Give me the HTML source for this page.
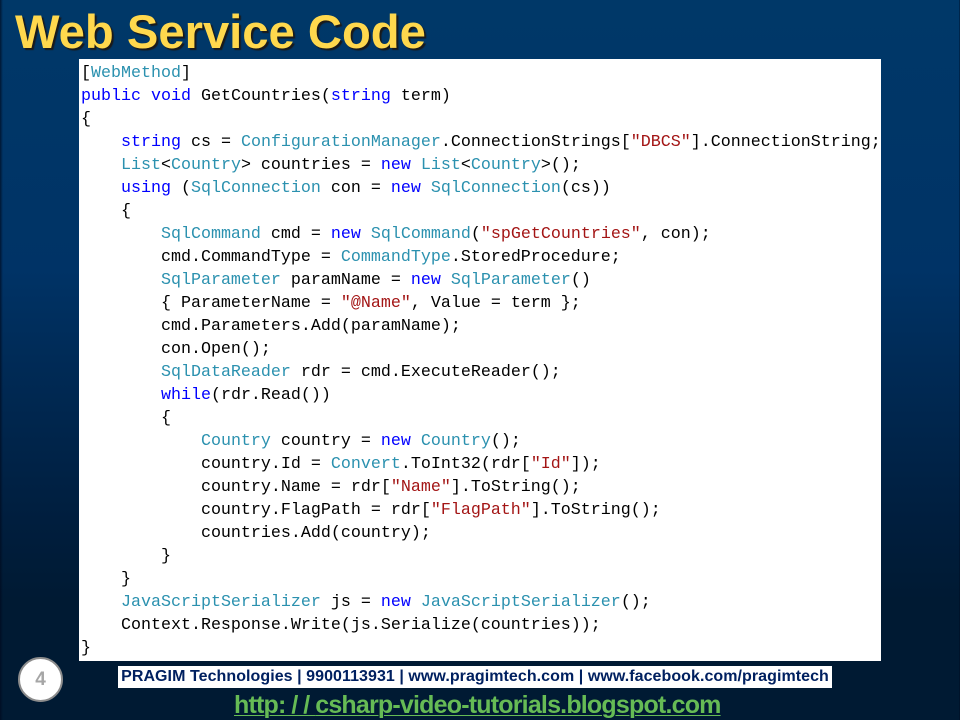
<!DOCTYPE html>
<html><head><meta charset="utf-8"><style>
html,body{margin:0;padding:0}
body{width:960px;height:720px;position:relative;overflow:hidden;background:linear-gradient(180deg,#003868 0,#003366 270px,#002a55 370px,#001e3e 520px,#001a33 600px,#001a33 720px)}
#edge{position:absolute;left:0;top:0;width:3px;height:720px;background:linear-gradient(90deg,rgba(0,10,30,.7),rgba(0,10,30,0))}
#edge2{position:absolute;right:0;top:0;width:1px;height:720px;background:rgba(0,10,30,.4)}
#t{position:absolute;left:15px;top:4px;font:bold 47.2px/58px "Liberation Sans",sans-serif;color:#ffd84d;text-shadow:2px 2px 1px #1a1a1a;white-space:nowrap}
#c{position:absolute;left:79px;top:59px;width:802px;height:602px;background:#fff;overflow:hidden}
pre{margin:0;position:absolute;left:2px;top:3px;font:16.67px/23px "Liberation Mono",monospace;color:#000}
i{font-style:normal}.k{color:#0000ff}.y{color:#2b91af}.s{color:#a31515}
#n{position:absolute;left:18px;top:657px;width:41px;height:41px;border:2px solid #8c8c8c;border-radius:50%;background:#fff;text-align:center;font:bold 19px/41px "Liberation Sans",sans-serif;color:#a6a6a6}
#f{position:absolute;left:118px;top:666px;width:714px;height:22px;background:#fff;text-align:center;font:bold 16px/22px "Liberation Sans",sans-serif;letter-spacing:.06px;color:#002060;white-space:nowrap}
#u{position:absolute;left:234px;top:690px;font:bold 25px/30px "Liberation Sans",sans-serif;color:#66bb55;text-decoration:underline;text-decoration-thickness:1px;text-underline-offset:2px;white-space:nowrap;letter-spacing:-.8px}
#u b{letter-spacing:5px}
</style></head><body>
<div id="edge"></div><div id="edge2"></div>
<div id="t">Web Service Code</div>
<div id="c"><pre>[<i class="y">WebMethod</i>]
<i class="k">public</i> <i class="k">void</i> GetCountries(<i class="k">string</i> term)
{
    <i class="k">string</i> cs = <i class="y">ConfigurationManager</i>.ConnectionStrings[<i class="s">"DBCS"</i>].ConnectionString;
    <i class="y">List</i>&lt;<i class="y">Country</i>&gt; countries = <i class="k">new</i> <i class="y">List</i>&lt;<i class="y">Country</i>&gt;();
    <i class="k">using</i> (<i class="y">SqlConnection</i> con = <i class="k">new</i> <i class="y">SqlConnection</i>(cs))
    {
        <i class="y">SqlCommand</i> cmd = <i class="k">new</i> <i class="y">SqlCommand</i>(<i class="s">"spGetCountries"</i>, con);
        cmd.CommandType = <i class="y">CommandType</i>.StoredProcedure;
        <i class="y">SqlParameter</i> paramName = <i class="k">new</i> <i class="y">SqlParameter</i>()
        { ParameterName = <i class="s">"@Name"</i>, Value = term };
        cmd.Parameters.Add(paramName);
        con.Open();
        <i class="y">SqlDataReader</i> rdr = cmd.ExecuteReader();
        <i class="k">while</i>(rdr.Read())
        {
            <i class="y">Country</i> country = <i class="k">new</i> <i class="y">Country</i>();
            country.Id = <i class="y">Convert</i>.ToInt32(rdr[<i class="s">"Id"</i>]);
            country.Name = rdr[<i class="s">"Name"</i>].ToString();
            country.FlagPath = rdr[<i class="s">"FlagPath"</i>].ToString();
            countries.Add(country);
        }
    }
    <i class="y">JavaScriptSerializer</i> js = <i class="k">new</i> <i class="y">JavaScriptSerializer</i>();
    Context.Response.Write(js.Serialize(countries));
}</pre></div>
<div id="n">4</div>
<div id="f">PRAGIM Technologies | 9900113931 | www.pragimtech.com | www.facebook.com/pragimtech</div>
<div id="u">http<b>://</b>csharp-video-tutorials.blogspot.com</div>
</body></html>
